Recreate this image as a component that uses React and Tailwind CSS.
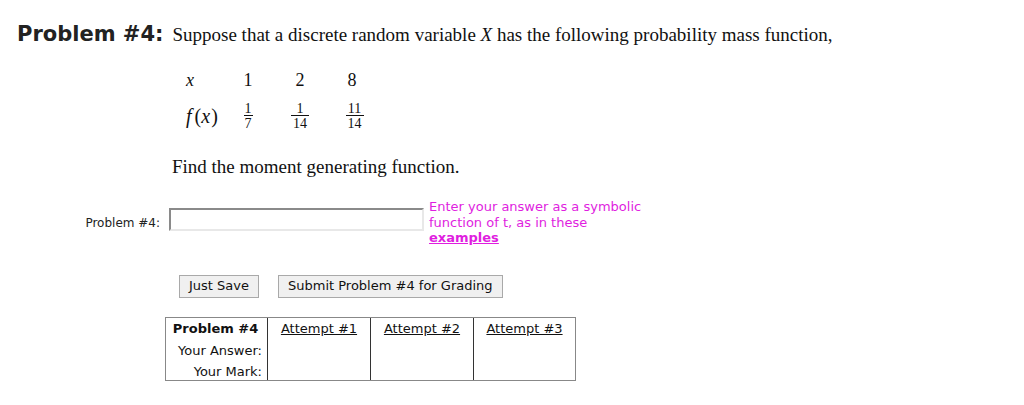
export default function App() {
  const serif = { fontFamily: '"Liberation Serif", "Times New Roman", serif' };
  return (
    <div className="w-[1024px] h-[405px] bg-white text-[#1a1a1a] overflow-hidden relative" style={{ fontFamily: '"DejaVu Sans", Verdana, sans-serif' }}>
      <div className="flex items-baseline pl-[17px] pt-[19px]">
        <span className="text-[21px] font-bold text-[#222]" style={{ fontFamily: '"DejaVu Sans", Verdana, sans-serif' }}>Problem #4:</span>
        <span className="ml-[9px] text-[19px] text-[#111]" style={serif}>
          Suppose that a discrete random variable <i>X</i> has the following probability mass function,
        </span>
      </div>

      <div className="pl-[172px] mt-[18px] text-[#111]" style={serif}>
        <div className="grid grid-cols-[50px_52px_52px_52px] text-[18px] items-center leading-[22px]">
          <div className="italic pl-[14px]">x</div>
          <div className="text-center">1</div>
          <div className="text-center">2</div>
          <div className="text-center">8</div>
        </div>
        <div className="grid grid-cols-[50px_52px_52px_52px] items-center mt-[10px]">
          <div className="text-[20px] italic pl-[14px] whitespace-nowrap">f<span className="not-italic ml-[3px]">(</span>x<span className="not-italic ml-[1px]">)</span></div>
          <div className="flex flex-col items-center text-[14px] leading-[13px]">
            <span className="border-b border-[#111] px-[1px]">1</span>
            <span className="px-[1px] pt-[1px]">7</span>
          </div>
          <div className="flex flex-col items-center text-[14px] leading-[13px]">
            <span className="border-b border-[#111] w-[18px] text-center">1</span>
            <span className="pt-[1px]">14</span>
          </div>
          <div className="flex flex-col items-center text-[14px] leading-[13px] pl-[5px]">
            <span className="border-b border-[#111] w-[18px] text-center">11</span>
            <span className="pt-[1px]">14</span>
          </div>
        </div>
      </div>

      <div className="pl-[172px] mt-[22px] text-[19px] text-[#111]" style={serif}>
        Find the moment generating function.
      </div>

      <div className="flex items-start mt-[18px]">
        <div className="w-[160px] text-right text-[12px] pt-[15px] text-[#222]">Problem #4:</div>
        <div className="ml-[9px] mt-[9px] w-[255px] h-[23px] bg-white border-2 border-t-[#8a8a8a] border-l-[#8a8a8a] border-b-[#e8e8e8] border-r-[#e8e8e8]"></div>
        <div className="ml-[5px] text-[13px] leading-[15.5px] text-[#e01ee0]">
          <div>Enter your answer as a symbolic</div>
          <div>function of t, as in these</div>
          <div className="font-bold underline">examples</div>
        </div>
      </div>

      <div className="flex pl-[179px] mt-[29px] gap-[19px]">
        <button className="h-[23px] px-[9px] text-[13px] bg-[#f0f0f0] border border-[#a9a9a9] text-[#111]">Just Save</button>
        <button className="h-[23px] px-[9px] text-[13px] bg-[#f0f0f0] border border-[#a9a9a9] text-[#111]">Submit Problem #4 for Grading</button>
      </div>

      <div className="ml-[165px] mt-[19px] w-[411px] border border-[#888] grid grid-cols-[102px_103px_103px_1fr] text-[13px] text-[#111]">
        <div className="border-r border-[#333] flex flex-col items-end pr-[5px]">
          <div className="h-[22px] leading-[22px] font-bold self-center pl-[3px]">Problem #4</div>
          <div className="h-[21px] leading-[22px]">Your Answer:</div>
          <div className="h-[19px] leading-[22px]">Your Mark:</div>
        </div>
        <div className="border-r border-[#333] text-center">
          <div className="h-[22px] leading-[22px] underline">Attempt #1</div>
        </div>
        <div className="border-r border-[#333] text-center">
          <div className="h-[22px] leading-[22px] underline">Attempt #2</div>
        </div>
        <div className="text-center">
          <div className="h-[22px] leading-[22px] underline">Attempt #3</div>
        </div>
      </div>
    </div>
  );
}
